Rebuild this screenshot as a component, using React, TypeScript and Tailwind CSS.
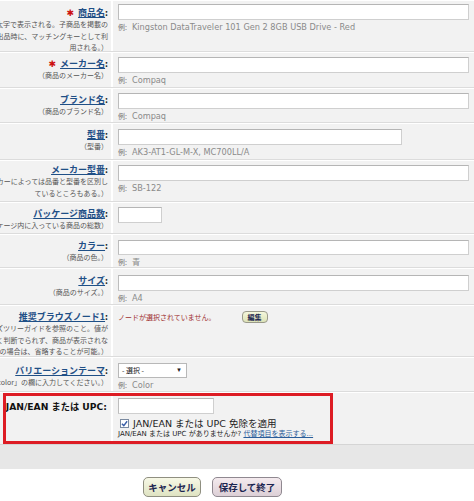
import React from "react";

const JP = { fontFamily: '"Noto Sans CJK JP", "DejaVu Sans", sans-serif' };
const EX = { fontFamily: '"DejaVu Sans", "Noto Sans CJK JP", sans-serif' };

function Label({ text, req }: { text: string; req?: boolean }) {
  return (
    <div className="whitespace-nowrap text-[9px] leading-[13px] font-bold" style={JP}>
      {req && <span className="text-[#cc1111] mr-[4px] text-[9px]">✱</span>}
      <span className="text-[#1f4f86] underline">{text}</span>
      <span className="text-[#222]">:</span>
    </div>
  );
}

function Desc({ lines }: { lines: string[] }) {
  return (
    <div className="flex flex-col items-end">
      {lines.map((l, i) => (
        <div key={i} className="whitespace-nowrap text-[7px] leading-[11.5px] text-[#555]" style={JP}>
          {l}
        </div>
      ))}
    </div>
  );
}

function Input({ w, mt }: { w: string; mt: string }) {
  return <div className={`${w} ${mt} h-[16px] bg-white border border-[#cfcfcf] border-t-[#b5b5b5] border-l-[#bdbdbd]`} />;
}

function Example({ text }: { text: string }) {
  return (
    <div className="mt-[2px] text-[8.2px] leading-[10px] text-[#8a8a8a] whitespace-nowrap" style={EX}>
      <span style={JP} className="text-[7px] text-[#777]">例:</span>
      <span className="ml-[5px]">{text}</span>
    </div>
  );
}

function Row({
  h,
  lpt,
  left,
  right,
}: {
  h: string;
  lpt: string;
  left: React.ReactNode;
  right: React.ReactNode;
}) {
  return (
    <div className={`flex ${h} border-b border-b-[#dcdcdc] border-t border-t-white bg-[#f2f2f2]`}>
      <div className={`w-[113px] shrink-0 overflow-hidden flex justify-end ${lpt} pr-[3px] border-r-2 border-r-white`}>
        <div className="flex flex-col items-end">{left}</div>
      </div>
      <div className="flex-1 pl-[5px] flex flex-col items-start">{right}</div>
    </div>
  );
}

export default function App() {
  return (
    <div className="w-[474px] h-[501px] overflow-hidden bg-white relative">
      <Row
        h="h-[52px]"
        lpt="pt-[5px]"
        left={
          <>
            <Label text="商品名" req />
            <Desc
              lines={[
                "（商品名は太字で表示される。子商品を掲載の",
                "場合の出品時に、マッチングキーとして利",
                "用される。）",
              ]}
            />
          </>
        }
        right={
          <>
            <Input w="w-[351px]" mt="mt-[3px]" />
            <Example text="Kingston DataTraveler 101 Gen 2 8GB USB Drive - Red" />
          </>
        }
      />
      <Row
        h="h-[36px]"
        lpt="pt-[4px]"
        left={
          <>
            <Label text="メーカー名" req />
            <Desc lines={["（商品のメーカー名）"]} />
          </>
        }
        right={
          <>
            <Input w="w-[351px]" mt="mt-[4px]" />
            <Example text="Compaq" />
          </>
        }
      />
      <Row
        h="h-[35px]"
        lpt="pt-[4px]"
        left={
          <>
            <Label text="ブランド名" />
            <Desc lines={["（商品のブランド名）"]} />
          </>
        }
        right={
          <>
            <Input w="w-[351px]" mt="mt-[4px]" />
            <Example text="Compaq" />
          </>
        }
      />
      <Row
        h="h-[37px]"
        lpt="pt-[4px]"
        left={
          <>
            <Label text="型番" />
            <Desc lines={["（型番）"]} />
          </>
        }
        right={
          <>
            <Input w="w-[284px]" mt="mt-[5px]" />
            <Example text="AK3-AT1-GL-M-X, MC700LL/A" />
          </>
        }
      />
      <Row
        h="h-[42px]"
        lpt="pt-[2px]"
        left={
          <>
            <Label text="メーカー型番" />
            <Desc lines={["（メーカーによっては品番と型番を区別し", "ているところもある。）"]} />
          </>
        }
        right={
          <>
            <Input w="w-[351px]" mt="mt-[4px]" />
            <Example text="SB-122" />
          </>
        }
      />
      <Row
        h="h-[32px]"
        lpt="pt-[4px]"
        left={
          <>
            <Label text="パッケージ商品数" />
            <Desc lines={["（パッケージ内に入っている商品の総数）"]} />
          </>
        }
        right={<Input w="w-[44px]" mt="mt-[4px]" />}
      />
      <Row
        h="h-[34px]"
        lpt="pt-[4px]"
        left={
          <>
            <Label text="カラー" />
            <Desc lines={["（商品の色。）"]} />
          </>
        }
        right={
          <>
            <Input w="w-[351px]" mt="mt-[5px]" />
            <Example text="青" />
          </>
        }
      />
      <Row
        h="h-[37px]"
        lpt="pt-[5px]"
        left={
          <>
            <Label text="サイズ" />
            <Desc lines={["（商品のサイズ。）"]} />
          </>
        }
        right={
          <>
            <Input w="w-[351px]" mt="mt-[6px]" />
            <Example text="A4" />
          </>
        }
      />
      <Row
        h="h-[52px]"
        lpt="pt-[4px]"
        left={
          <>
            <Label text="推奨ブラウズノード1" />
            <Desc
              lines={[
                "（ブラウズツリーガイドを参照のこと。値が",
                "正しく判断でられず、商品が表示されな",
                "い場合の場合は、省略することが可能。）",
              ]}
            />
          </>
        }
        right={
          <div className="flex items-center mt-[5px]">
            <span className="text-[7px] leading-[12px] text-[#a03030]" style={JP}>
              ノードが選択されていません。
            </span>
            <span
              className="ml-[26px] h-[12px] px-[5px] flex items-center rounded-[4px] border border-[#9a9a8a] bg-gradient-to-b from-[#f4f7dc] to-[#dde3b8] text-[7px] font-bold text-[#1c2550]"
              style={JP}
            >
              編集
            </span>
          </div>
        }
      />
      <Row
        h="h-[35px]"
        lpt="pt-[6px]"
        left={
          <>
            <Label text="バリエーションテーマ" />
            <Desc lines={["（バリエーションの場合は「color」の欄に入力してください。）"]} />
          </>
        }
        right={
          <>
            <div className="mt-[5px] w-[69px] h-[15px] bg-white border border-[#b8b8b8] flex items-center justify-between pl-[3px] pr-[4px]">
              <span className="text-[7px] text-[#222]" style={JP}>
                - 選択 -
              </span>
              <span className="text-[6px] text-[#222]">▼</span>
            </div>
            <Example text="Color" />
          </>
        }
      />
      {/* JAN row */}
      <div className="relative flex h-[52px] bg-[#f2f2f2] border-t border-t-white">
        <div className="w-[113px] shrink-0 flex justify-end pt-[7px] pr-[4px] border-r-2 border-r-white">
          <span className="text-[9.2px] font-bold text-[#111] whitespace-nowrap" style={EX}>
            JAN/EAN または UPC:
          </span>
        </div>
        <div className="flex-1 pl-[5px] flex flex-col items-start">
          <Input w="w-[96px]" mt="mt-[5px]" />
          <div className="flex items-center mt-[4px] ml-[2px]">
            <span className="w-[9px] h-[9px] border border-[#7a8aa0] bg-white flex items-center justify-center">
              <svg width="7" height="7" viewBox="0 0 8 8">
                <path d="M1 4.2 L3.2 6.4 L7 1.4" stroke="#3a5fa8" strokeWidth="1.6" fill="none" />
              </svg>
            </span>
            <span className="ml-[4px] text-[9.5px] leading-[11px] text-[#222] whitespace-nowrap" style={EX}>
              JAN/EAN または UPC 免除を適用
            </span>
          </div>
          <div className="text-[7px] leading-[10px] text-[#222] whitespace-nowrap" style={EX}>
            JAN/EAN または UPC がありませんか?{" "}
            <span className="text-[#2a5d9a] underline">代替項目を表示する...</span>
          </div>
        </div>
        <div className="absolute left-[3px] top-0 w-[330px] h-[51px] border-[3px] border-[#dd1c24]" />
      </div>
      <div className="h-[25px] bg-[#e7e7e7] border-t border-t-[#d5d5d5]" />
      <div className="flex pl-[143px] pt-[8px] gap-[11px]">
        <div
          className="w-[58px] h-[20px] rounded-[5px] border border-[#8f8f80] bg-gradient-to-b from-[#f7f8e6] to-[#dfe3c2] flex items-center justify-center text-[9.5px] font-bold text-[#1c2550]"
          style={JP}
        >
          キャンセル
        </div>
        <div
          className="w-[70px] h-[20px] rounded-[5px] border border-[#8f8890] bg-gradient-to-b from-[#f4eaee] to-[#dccfd6] flex items-center justify-center text-[9.5px] font-bold text-[#1c2550]"
          style={JP}
        >
          保存して終了
        </div>
      </div>
    </div>
  );
}
